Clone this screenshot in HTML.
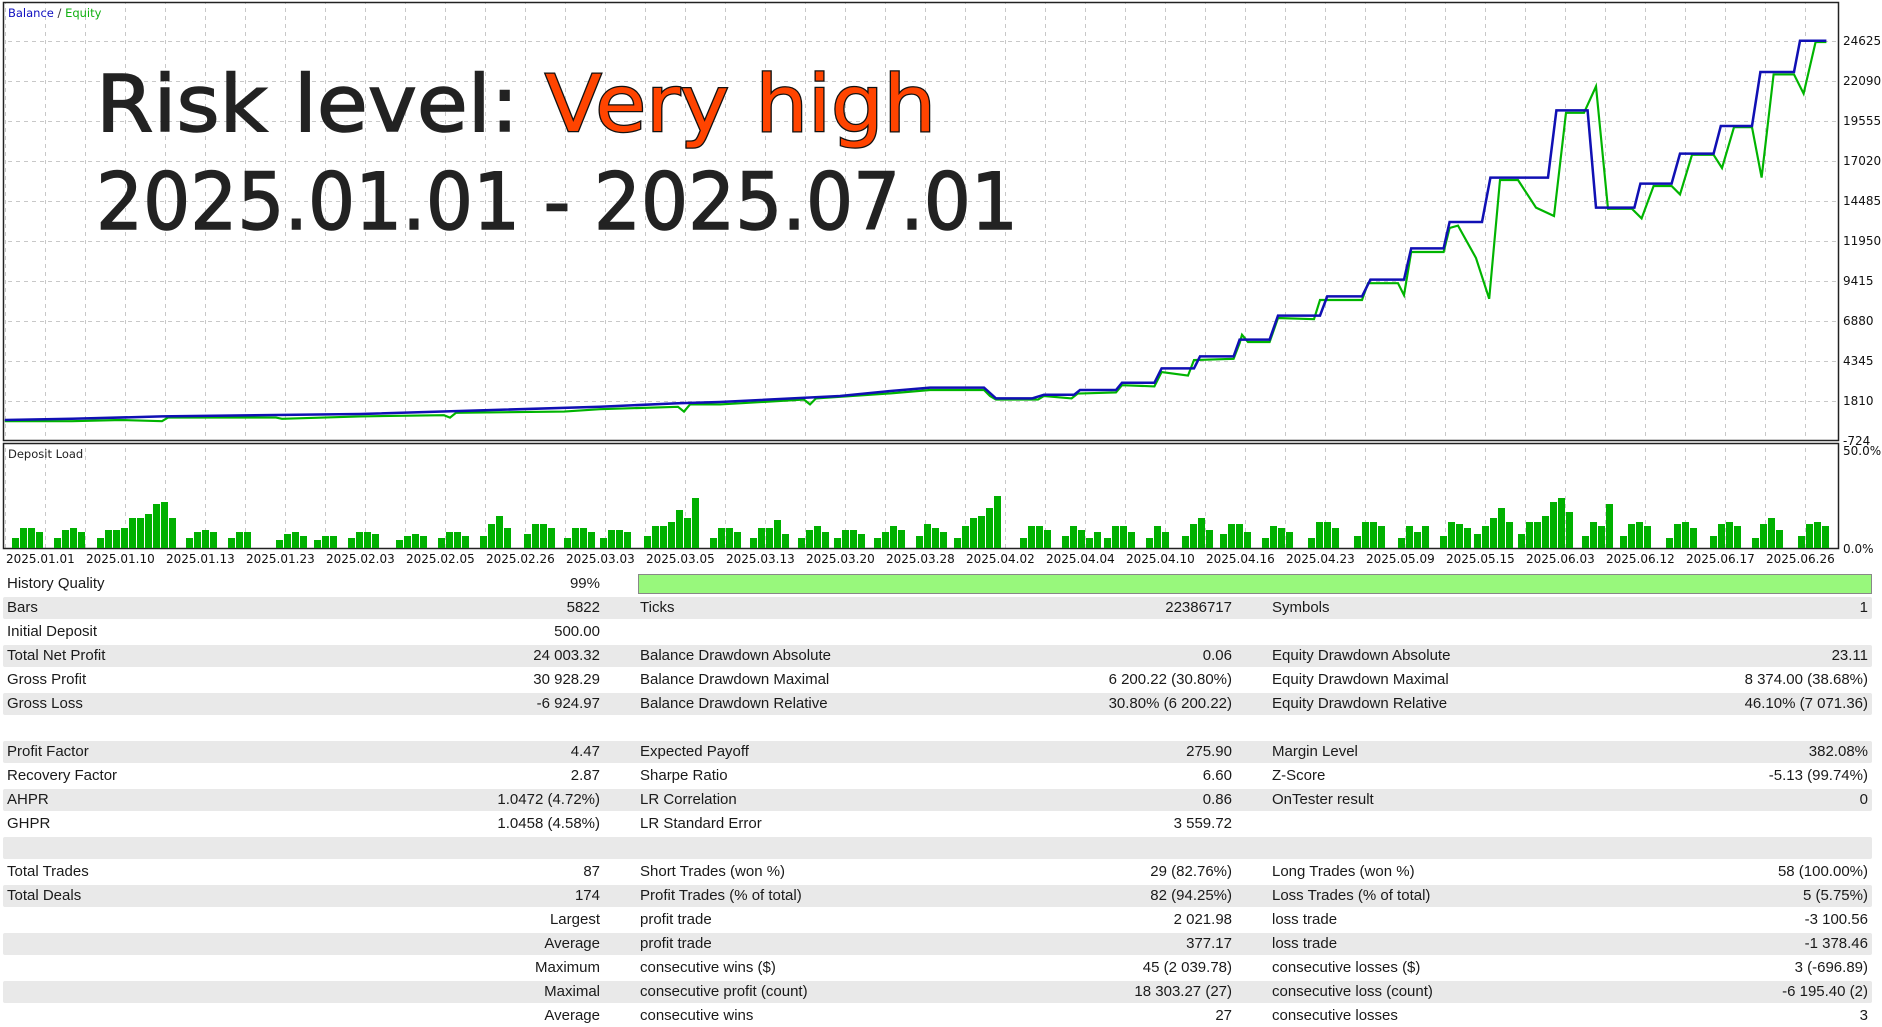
<!DOCTYPE html>
<html><head><meta charset="utf-8">
<style>
html,body{margin:0;padding:0;background:#fff;}
body{width:1882px;height:1025px;position:relative;overflow:hidden;font-family:"Liberation Sans",sans-serif;}
.row{position:absolute;left:3px;width:1869px;height:22px;}
.g{background:#e9e9e9;border-radius:2px;}
.c{position:absolute;top:0;line-height:22px;font-size:15px;color:#1a1a1a;white-space:nowrap;}
.r{text-align:right;}
</style></head><body>
<svg width="1882" height="570" style="position:absolute;left:0;top:0">
<defs>
<pattern id="pv" x="45" y="0" width="40" height="8" patternUnits="userSpaceOnUse"><rect x="0" y="0" width="1" height="4" fill="#c8c8c8"/></pattern>
<pattern id="ph" x="0" y="41" width="8" height="40" patternUnits="userSpaceOnUse"><rect x="0" y="0" width="4" height="1" fill="#c8c8c8"/></pattern>
</defs>
<rect x="4" y="3" width="1834" height="437" fill="url(#pv)"/>
<rect x="4" y="41" width="1834" height="370" fill="url(#ph)"/>
<rect x="4" y="444" width="1834" height="104" fill="url(#pv)"/>
<rect x="3.5" y="2.5" width="1835" height="438" fill="none" stroke="#222" stroke-width="1.5"/>
<rect x="3.5" y="443.5" width="1835" height="105" fill="none" stroke="#222" stroke-width="1.5"/>
<text x="8" y="17" font-family="DejaVu Sans,sans-serif" font-size="11.5"><tspan fill="#1010c0">Balance</tspan><tspan fill="#333"> / </tspan><tspan fill="#10b010">Equity</tspan></text>
<text x="8" y="458" font-family="DejaVu Sans,sans-serif" font-size="11.5" fill="#222">Deposit Load</text>
<g font-family="DejaVu Sans,sans-serif" font-size="12" fill="#111">
<text x="1843" y="45">24625</text><text x="1843" y="85">22090</text><text x="1843" y="125">19555</text><text x="1843" y="165">17020</text><text x="1843" y="205">14485</text><text x="1843" y="245">11950</text><text x="1843" y="285">9415</text><text x="1843" y="325">6880</text><text x="1843" y="365">4345</text><text x="1843" y="405">1810</text><text x="1843" y="445">-724</text>
<text x="1843" y="455">50.0%</text><text x="1843" y="553">0.0%</text>
</g>
<g font-family="DejaVu Sans,sans-serif" font-size="12" fill="#111">
<text x="6" y="563">2025.01.01</text><text x="86" y="563">2025.01.10</text><text x="166" y="563">2025.01.13</text><text x="246" y="563">2025.01.23</text><text x="326" y="563">2025.02.03</text><text x="406" y="563">2025.02.05</text><text x="486" y="563">2025.02.26</text><text x="566" y="563">2025.03.03</text><text x="646" y="563">2025.03.05</text><text x="726" y="563">2025.03.13</text><text x="806" y="563">2025.03.20</text><text x="886" y="563">2025.03.28</text><text x="966" y="563">2025.04.02</text><text x="1046" y="563">2025.04.04</text><text x="1126" y="563">2025.04.10</text><text x="1206" y="563">2025.04.16</text><text x="1286" y="563">2025.04.23</text><text x="1366" y="563">2025.05.09</text><text x="1446" y="563">2025.05.15</text><text x="1526" y="563">2025.06.03</text><text x="1606" y="563">2025.06.12</text><text x="1686" y="563">2025.06.17</text><text x="1766" y="563">2025.06.26</text>
</g>
<path stroke="#00b000" stroke-width="7" fill="none" d="M15.5 548v-10m8 10v-20m8 20v-20m8 20v-16 M57.5 548v-10m8 10v-18m8 18v-20m8 20v-16 M100.5 548v-10m8 10v-18m8 18v-18m8 18v-20m8 20v-30m8 30v-30m8 30v-34m8 34v-44m8 44v-46m8 46v-30 M189.5 548v-10m8 10v-16m8 16v-18m8 18v-16 M231.5 548v-10m8 10v-16m8 16v-16 M279.5 548v-8m8 8v-14m8 14v-16m8 16v-12 M317.5 548v-8m8 8v-12m8 12v-12 M351.5 548v-10m8 10v-16m8 16v-16m8 16v-14 M399.5 548v-8m8 8v-12m8 12v-14m8 14v-12 M441.5 548v-10m8 10v-16m8 16v-16m8 16v-12 M483.5 548v-12m8 12v-24m8 24v-32m8 32v-20 M527.5 548v-14m8 14v-24m8 24v-24m8 24v-20 M567.5 548v-10m8 10v-20m8 20v-20m8 20v-16 M603.5 548v-10m8 10v-18m8 18v-18m8 18v-16 M647.5 548v-12m8 12v-22m8 22v-22m8 22v-26m8 26v-38m8 38v-30m8 30v-50 M713.5 548v-10m8 10v-20m8 20v-20m8 20v-16 M753.5 548v-10m8 10v-20m8 20v-20m8 20v-28m8 28v-14 M801.5 548v-10m8 10v-18m8 18v-22m8 22v-16 M837.5 548v-10m8 10v-18m8 18v-18m8 18v-14 M877.5 548v-10m8 10v-16m8 16v-22m8 22v-18 M919.5 548v-12m8 12v-24m8 24v-20m8 20v-16 M957.5 548v-10m8 10v-22m8 22v-30m8 30v-32m8 32v-40m8 40v-52 M1023.5 548v-10m8 10v-22m8 22v-22m8 22v-18 M1065.5 548v-12m8 12v-22m8 22v-18m8 18v-10m8 10v-16 M1107.5 548v-10m8 10v-22m8 22v-22m8 22v-16 M1149.5 548v-10m8 10v-22m8 22v-16 M1185.5 548v-12m8 12v-24m8 24v-30m8 30v-18 M1223.5 548v-14m8 14v-24m8 24v-24m8 24v-16 M1265.5 548v-10m8 10v-22m8 22v-20m8 20v-16 M1311.5 548v-10m8 10v-26m8 26v-26m8 26v-20 M1357.5 548v-12m8 12v-26m8 26v-26m8 26v-22 M1401.5 548v-10m8 10v-22m8 22v-16m8 16v-22 M1443.5 548v-12m8 12v-26m8 26v-24m8 24v-20 M1477.5 548v-14m8 14v-22m8 22v-30m8 30v-40m8 40v-26 M1521.5 548v-14m8 14v-26m8 26v-26m8 26v-32m8 32v-46m8 46v-50m8 50v-36 M1585.5 548v-12m8 12v-26m8 26v-22m8 22v-44 M1623.5 548v-12m8 12v-24m8 24v-26m8 26v-22 M1669.5 548v-10m8 10v-24m8 24v-26m8 26v-20 M1713.5 548v-12m8 12v-24m8 24v-26m8 26v-22 M1755.5 548v-10m8 10v-24m8 24v-30m8 30v-18 M1801.5 548v-12m8 12v-24m8 24v-26m8 26v-22"/>
<g transform="scale(1.2)" fill="none" stroke-linejoin="miter">
<polyline stroke="#00b400" stroke-width="1.8" points="4,351 60,351 100,350 135,351 140,348 190,348 230,348 235,349 300,347 370,346 375,348 380,344 470,343 500,341 565,339 570,343 575,337 600,337 670,333 675,337 680,332 740,328 775,325 820,325 825,330 830,333 865,333 870,330 893,332 898,328 930,327 935,321 962,322 968,310 990,313 995,300 1028,299 1033,286 1035,279 1040,285 1058,285 1065,265 1095,266 1100,250 1135,250 1140,236 1165,236 1170,246 1176,210 1203,210 1208,190 1215,188 1230,215 1241,249 1250,150 1265,150 1280,173 1295,180 1305,94 1320,94 1330,72 1340,174 1360,174 1368,182 1378,155 1393,155 1400,162 1410,129 1428,129 1435,140 1445,106 1460,106 1468,148 1478,62 1495,62 1503,78 1513,35 1522,35"/>
<polyline stroke="#1010b4" stroke-width="2.1" points="4,350 60,349 135,347 300,345 400,342 500,339 565,336 600,335 700,330 740,326 775,323 820,323 830,332 860,332 870,329 895,329 900,325 930,325 935,319 962,319 968,307 995,307 1000,297 1028,297 1033,283 1058,283 1065,263 1100,263 1106,247 1135,247 1142,233 1170,233 1176,207 1203,207 1208,185 1235,185 1242,148 1290,148 1297,92 1323,92 1330,173 1362,173 1367,153 1393,153 1400,128 1428,128 1434,105 1460,105 1467,60 1495,60 1500,34 1522,34"/>
</g>
<g font-family="DejaVu Sans,sans-serif" font-size="78" font-weight="500">
<text x="96" y="131" textLength="840" lengthAdjust="spacingAndGlyphs" fill="#222" stroke="#222" stroke-width="1.5">Risk level: <tspan fill="#ff4400" stroke="#111" stroke-width="2.5" paint-order="stroke">Very high</tspan></text>
<text x="96" y="229" textLength="922" lengthAdjust="spacingAndGlyphs" fill="#222" stroke="#222" stroke-width="1.5">2025.01.01 - 2025.07.01</text>
</g>
</svg>

<div style="position:absolute;left:638px;top:574px;width:1232px;height:18px;background:#98f87c;border:1px solid #888;"></div>

<div class="row" style="top:573px"><div class="c" style="left:4px">History Quality</div><div class="c r" style="right:1272px">99%</div></div>
<div class="row g" style="top:597px"><div class="c" style="left:4px">Bars</div><div class="c r" style="right:1272px">5822</div><div class="c" style="left:637px">Ticks</div><div class="c r" style="right:640px">22386717</div><div class="c" style="left:1269px">Symbols</div><div class="c r" style="right:4px">1</div></div>
<div class="row" style="top:621px"><div class="c" style="left:4px">Initial Deposit</div><div class="c r" style="right:1272px">500.00</div></div>
<div class="row g" style="top:645px"><div class="c" style="left:4px">Total Net Profit</div><div class="c r" style="right:1272px">24 003.32</div><div class="c" style="left:637px">Balance Drawdown Absolute</div><div class="c r" style="right:640px">0.06</div><div class="c" style="left:1269px">Equity Drawdown Absolute</div><div class="c r" style="right:4px">23.11</div></div>
<div class="row" style="top:669px"><div class="c" style="left:4px">Gross Profit</div><div class="c r" style="right:1272px">30 928.29</div><div class="c" style="left:637px">Balance Drawdown Maximal</div><div class="c r" style="right:640px">6 200.22 (30.80%)</div><div class="c" style="left:1269px">Equity Drawdown Maximal</div><div class="c r" style="right:4px">8 374.00 (38.68%)</div></div>
<div class="row g" style="top:693px"><div class="c" style="left:4px">Gross Loss</div><div class="c r" style="right:1272px">-6 924.97</div><div class="c" style="left:637px">Balance Drawdown Relative</div><div class="c r" style="right:640px">30.80% (6 200.22)</div><div class="c" style="left:1269px">Equity Drawdown Relative</div><div class="c r" style="right:4px">46.10% (7 071.36)</div></div>
<div class="row" style="top:717px"></div>
<div class="row g" style="top:741px"><div class="c" style="left:4px">Profit Factor</div><div class="c r" style="right:1272px">4.47</div><div class="c" style="left:637px">Expected Payoff</div><div class="c r" style="right:640px">275.90</div><div class="c" style="left:1269px">Margin Level</div><div class="c r" style="right:4px">382.08%</div></div>
<div class="row" style="top:765px"><div class="c" style="left:4px">Recovery Factor</div><div class="c r" style="right:1272px">2.87</div><div class="c" style="left:637px">Sharpe Ratio</div><div class="c r" style="right:640px">6.60</div><div class="c" style="left:1269px">Z-Score</div><div class="c r" style="right:4px">-5.13 (99.74%)</div></div>
<div class="row g" style="top:789px"><div class="c" style="left:4px">AHPR</div><div class="c r" style="right:1272px">1.0472 (4.72%)</div><div class="c" style="left:637px">LR Correlation</div><div class="c r" style="right:640px">0.86</div><div class="c" style="left:1269px">OnTester result</div><div class="c r" style="right:4px">0</div></div>
<div class="row" style="top:813px"><div class="c" style="left:4px">GHPR</div><div class="c r" style="right:1272px">1.0458 (4.58%)</div><div class="c" style="left:637px">LR Standard Error</div><div class="c r" style="right:640px">3 559.72</div></div>
<div class="row g" style="top:837px"></div>
<div class="row" style="top:861px"><div class="c" style="left:4px">Total Trades</div><div class="c r" style="right:1272px">87</div><div class="c" style="left:637px">Short Trades (won %)</div><div class="c r" style="right:640px">29 (82.76%)</div><div class="c" style="left:1269px">Long Trades (won %)</div><div class="c r" style="right:4px">58 (100.00%)</div></div>
<div class="row g" style="top:885px"><div class="c" style="left:4px">Total Deals</div><div class="c r" style="right:1272px">174</div><div class="c" style="left:637px">Profit Trades (% of total)</div><div class="c r" style="right:640px">82 (94.25%)</div><div class="c" style="left:1269px">Loss Trades (% of total)</div><div class="c r" style="right:4px">5 (5.75%)</div></div>
<div class="row" style="top:909px"><div class="c r" style="right:1272px">Largest</div><div class="c" style="left:637px">profit trade</div><div class="c r" style="right:640px">2 021.98</div><div class="c" style="left:1269px">loss trade</div><div class="c r" style="right:4px">-3 100.56</div></div>
<div class="row g" style="top:933px"><div class="c r" style="right:1272px">Average</div><div class="c" style="left:637px">profit trade</div><div class="c r" style="right:640px">377.17</div><div class="c" style="left:1269px">loss trade</div><div class="c r" style="right:4px">-1 378.46</div></div>
<div class="row" style="top:957px"><div class="c r" style="right:1272px">Maximum</div><div class="c" style="left:637px">consecutive wins ($)</div><div class="c r" style="right:640px">45 (2 039.78)</div><div class="c" style="left:1269px">consecutive losses ($)</div><div class="c r" style="right:4px">3 (-696.89)</div></div>
<div class="row g" style="top:981px"><div class="c r" style="right:1272px">Maximal</div><div class="c" style="left:637px">consecutive profit (count)</div><div class="c r" style="right:640px">18 303.27 (27)</div><div class="c" style="left:1269px">consecutive loss (count)</div><div class="c r" style="right:4px">-6 195.40 (2)</div></div>
<div class="row" style="top:1005px"><div class="c r" style="right:1272px">Average</div><div class="c" style="left:637px">consecutive wins</div><div class="c r" style="right:640px">27</div><div class="c" style="left:1269px">consecutive losses</div><div class="c r" style="right:4px">3</div></div>
</body></html>
